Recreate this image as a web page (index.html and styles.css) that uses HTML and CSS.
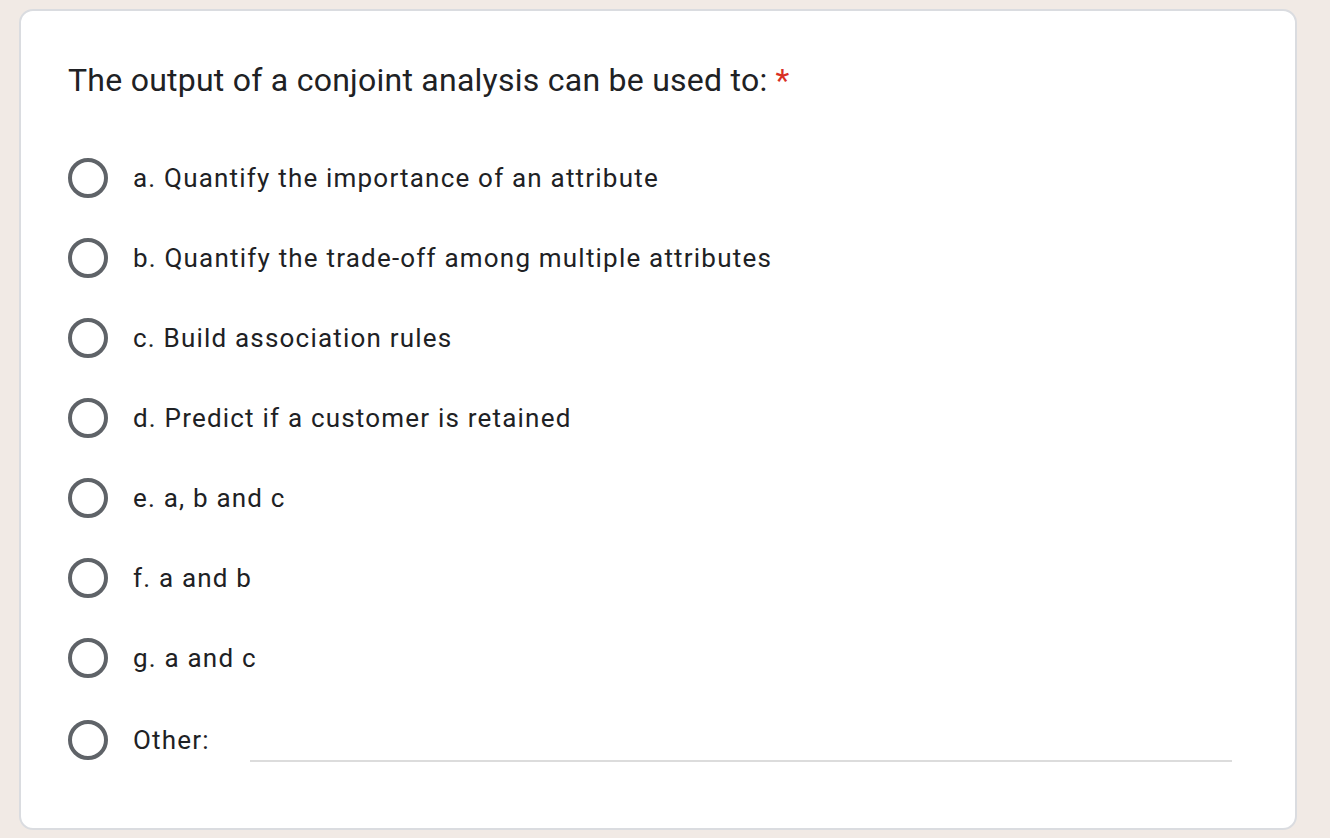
FILE: index.html
```html
<!DOCTYPE html>
<html>
<head>
<meta charset="utf-8">
<link rel="stylesheet" href="styles.css">
</head>
<body>
<div class="card">
  <div class="title">The output of a conjoint analysis can be used to:<span class="req">*</span></div>
  <div class="options">
    <div class="opt"><span class="radio"></span><span class="label">a. Quantify the importance of an attribute</span></div>
    <div class="opt"><span class="radio"></span><span class="label">b. Quantify the trade-off among multiple attributes</span></div>
    <div class="opt"><span class="radio"></span><span class="label">c. Build association rules</span></div>
    <div class="opt"><span class="radio"></span><span class="label">d. Predict if a customer is retained</span></div>
    <div class="opt"><span class="radio"></span><span class="label">e. a, b and c</span></div>
    <div class="opt"><span class="radio"></span><span class="label">f. a and b</span></div>
    <div class="opt"><span class="radio"></span><span class="label">g. a and c</span></div>
    <div class="opt other"><span class="radio"></span><span class="label">Other:</span><span class="line"></span></div>
  </div>
</div>
</body>
</html>
```
FILE: styles.css
```css
html, body {
  margin: 0;
  padding: 0;
  background: #f1eae5;
  width: 1330px;
  height: 838px;
  overflow: hidden;
}
body {
  font-family: Roboto, "Liberation Sans", sans-serif;
  color: #202124;
}
.card {
  margin: 9px 0 0 19px;
  width: 1278px;
  height: 821px;
  box-sizing: border-box;
  background: #fff;
  border: 2px solid #dadce0;
  border-radius: 14px;
  padding: 49px 0 0 47px;
}
.title {
  font-size: 32px;
  line-height: 40px;
  letter-spacing: 0.25px;
}
.req {
  color: #d93025;
  margin-left: 8px;
}
.options {
  margin-top: 38px;
  display: flex;
  flex-direction: column;
}
.opt {
  display: flex;
  align-items: center;
  height: 80px;
}
.opt.other {
  margin-top: 2px;
}
.radio {
  width: 40px;
  height: 40px;
  box-sizing: border-box;
  border: 4px solid #5f6368;
  border-radius: 50%;
  flex: none;
}
.label {
  margin-left: 25px;
  font-size: 26px;
  letter-spacing: 1.2px;
}
.other .line {
  margin-left: 40px;
  width: 982px;
  height: 2px;
  background: #dcdcdc;
  align-self: flex-end;
  margin-bottom: 18px;
}
```
